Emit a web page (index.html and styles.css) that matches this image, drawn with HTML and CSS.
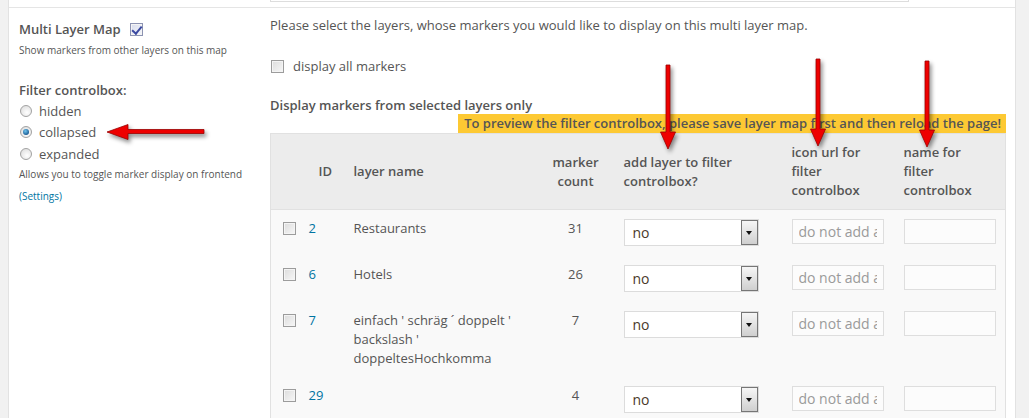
FILE: index.html
```html
<!DOCTYPE html>
<html lang="en">
  <head>
    <meta charset="UTF-8" />
    <meta name="viewport" content="width=device-width, initial-scale=1.0" />
    <title>Multi Layer Map</title>

    <link rel="stylesheet" href="styles.css">
  </head>

  <body>
    <div class="wrap">
      <div class="topbar"><div class="topfield"></div></div>

      <div class="settings">
        <div class="side">
          <div class="side-title">Multi Layer Map<span class="check checked"></span></div>
          <p class="hint">Show markers from other layers on this map</p>

          <div class="side-title filter-title">Filter controlbox:</div>
          <div class="radios">
            <label class="radio-row"><span class="radio"></span>hidden</label>
            <label class="radio-row"><span class="radio on"></span>collapsed</label>
            <label class="radio-row"><span class="radio"></span>expanded</label>
          </div>
          <p class="hint allows">Allows you to toggle marker display on frontend</p>
          <p class="hint settings-link"><a href="#">(Settings)</a></p>
        </div>

        <div class="main">
          <p class="intro">Please select the layers, whose markers you would like to display on this multi layer map.</p>
          <label class="all"><span class="check"></span>display all markers</label>
          <h4 class="subhead">Display markers from selected layers only</h4>
          <div class="notice-row">
            <span class="notice">To preview the filter controlbox, please save layer map first and then reload the page!</span>
          </div>

          <table class="layers">
            <colgroup>
              <col class="c-check" />
              <col class="c-id" />
              <col class="c-name" />
              <col class="c-count" />
              <col class="c-add" />
              <col class="c-icon" />
              <col class="c-label" />
            </colgroup>
            <thead>
              <tr>
                <th></th>
                <th class="th-id">ID</th>
                <th>layer name</th>
                <th class="center">marker count</th>
                <th>add layer to filter controlbox?</th>
                <th>icon url for filter controlbox</th>
                <th class="th-label">name for filter controlbox</th>
              </tr>
            </thead>
            <tbody>
              <tr>
                <td><span class="check"></span></td>
                <td><a href="#">2</a></td>
                <td>Restaurants</td>
                <td class="center">31</td>
                <td><div class="select"><span class="select-value">no</span><span class="select-btn"></span></div></td>
                <td><input class="field" type="text" placeholder="do not add an icon" /></td>
                <td><input class="field" type="text" /></td>
              </tr>
              <tr>
                <td><span class="check"></span></td>
                <td><a href="#">6</a></td>
                <td>Hotels</td>
                <td class="center">26</td>
                <td><div class="select"><span class="select-value">no</span><span class="select-btn"></span></div></td>
                <td><input class="field" type="text" placeholder="do not add an icon" /></td>
                <td><input class="field" type="text" /></td>
              </tr>
              <tr>
                <td><span class="check"></span></td>
                <td><a href="#">7</a></td>
                <td>einfach ' schräg ´ doppelt ' backslash ' doppeltesHochkomma</td>
                <td class="center">7</td>
                <td><div class="select"><span class="select-value">no</span><span class="select-btn"></span></div></td>
                <td><input class="field" type="text" placeholder="do not add an icon" /></td>
                <td><input class="field" type="text" /></td>
              </tr>
              <tr>
                <td><span class="check"></span></td>
                <td><a href="#">29</a></td>
                <td></td>
                <td class="center">4</td>
                <td><div class="select"><span class="select-value">no</span><span class="select-btn"></span></div></td>
                <td><input class="field" type="text" placeholder="do not add an icon" /></td>
                <td><input class="field" type="text" /></td>
              </tr>
            </tbody>
          </table>
        </div>
      </div>
    </div>

    <!-- red annotation arrows drawn over the screenshot -->
    <svg class="arrows" width="1029" height="418" viewBox="0 0 1029 418">
      <g class="arrow">
        <polygon points="107,132 128,124.5 128,129.5 204,129.5 204,133.5 128,133.5 128,139.5" />
        <polygon points="666,65 670,65 670,132 675.5,132 668,149 660.5,132 666,132" />
        <polygon points="816,59 820,59 820,129 825.5,129 818,146 810.5,129 816,129" />
        <polygon points="925,61 929,61 929,130 934.5,130 927,147 919.5,130 925,130" />
      </g>
    </svg>
  </body>
</html>
```

FILE: styles.css
```css
* {
  margin: 0;
  padding: 0;
  box-sizing: border-box;
}

html,
body {
  height: 100%;
}

body {
  font-family: "Open Sans", "DejaVu Sans", sans-serif;
  font-size: 13px;
  color: #555;
  background-color: #f1f1f1;
  overflow: hidden;
  position: relative;
}

a {
  color: #0074a2;
  text-decoration: none;
}

.wrap {
  margin-left: 8px;
  width: 1008px;
  min-height: 418px;
  background-color: #ffffff;
  border-left: 1px solid #e2e2e2;
  border-right: 1px solid #e2e2e2;
}

.topbar {
  height: 8px;
  border-bottom: 1px solid #e5e5e5;
}

.topfield {
  margin-left: 261px;
  width: 639px;
  height: 2px;
  border: 1px solid #dddddd;
  border-top: none;
}

.settings {
  display: grid;
  grid-template-columns: 261px 1fr;
}

/* left column */

.side {
  padding: 12px 10px 0;
}

.side-title {
  display: flex;
  align-items: center;
  gap: 9px;
  font-weight: 600;
  line-height: 18px;
}

.filter-title {
  margin-top: 24px;
}

.hint {
  font-size: 10px;
  line-height: 14px;
  margin-top: 5px;
}

.radios {
  margin-top: 1px;
}

.radio-row {
  display: flex;
  align-items: center;
  gap: 7px;
  height: 21.5px;
  padding-left: 1px;
}

.allows {
  margin-top: 2px;
}

.settings-link {
  margin-top: 8px;
}

.check {
  display: inline-block;
  flex: none;
  position: relative;
  width: 13px;
  height: 13px;
  border: 1px solid #9c9c9c;
  background: linear-gradient(135deg, #dcdcdc, #f7f7f7);
  box-shadow: inset 0 0 0 1px #f4f4f4;
}

.check.checked {
  background: linear-gradient(135deg, #d8dcec, #f4f6fb);
  border-color: #8c93b2;
}

.check.checked::after {
  content: "";
  position: absolute;
  left: 3.5px;
  top: 0.5px;
  width: 3.5px;
  height: 8px;
  border-right: 2px solid #3a48a0;
  border-bottom: 2px solid #3a48a0;
  transform: rotate(40deg);
}

.radio {
  position: relative;
  width: 12px;
  height: 12px;
  flex: none;
  border-radius: 50%;
  border: 1px solid #a2a2a2;
  background: radial-gradient(circle at 60% 65%, #ffffff, #d9d9d9);
}

.radio.on::after {
  content: "";
  position: absolute;
  left: 2px;
  top: 2px;
  width: 6px;
  height: 6px;
  border-radius: 50%;
  background: radial-gradient(circle at 40% 35%, #6fc4ee, #11508a 80%);
}

/* right column */

.main {
  padding: 8px 10px 0 0;
}

.intro {
  line-height: 18px;
}

.all {
  display: flex;
  align-items: center;
  gap: 9px;
  margin-top: 22px;
  padding-left: 1px;
  line-height: 20px;
  font-size: 13px;
}

.subhead {
  margin-top: 20px;
  font-size: 13px;
  font-weight: 600;
  line-height: 18px;
}

.notice-row {
  display: flex;
  justify-content: flex-end;
}

.notice {
  background-color: #fdc933;
  font-weight: 600;
  line-height: 19px;
  padding: 0 5px 0 6px;
  color: #555;
}

.layers {
  width: 735px;
  table-layout: fixed;
  border-collapse: collapse;
  background-color: #f9f9f9;
  border: 1px solid #e1e1e1;
}

.c-check { width: 28px; }
.c-id { width: 45px; }
.c-name { width: 194px; }
.c-count { width: 76px; }
.c-add { width: 168px; }
.c-icon { width: 112px; }
.c-label { width: 112px; }

.layers th {
  background-color: #ececec;
  font-weight: 600;
  text-align: left;
  line-height: 19px;
  padding: 9px 10px;
  vertical-align: middle;
  border-bottom: 1px solid #e1e1e1;
}

.layers th.th-id {
  padding-left: 20px;
}

.layers th.th-label {
  padding-right: 18px;
}

.layers td {
  padding: 9px 10px;
  line-height: 19px;
  vertical-align: top;
}

.layers td:first-child {
  padding-left: 12px;
}

.layers td .check {
  margin-top: 3px;
}

.layers .center {
  text-align: center;
}

.select {
  display: flex;
  width: 135px;
  height: 27px;
  margin-bottom: 1px;
  border: 1px solid #dcdcdc;
  background-color: #ffffff;
  font-size: 14px;
  color: #4a3a2a;
}

.select-value {
  flex: 1;
  line-height: 25px;
  padding-left: 8px;
}

.select-btn {
  position: relative;
  width: 17px;
  border: 1px solid #767676;
  background: linear-gradient(#f6f6f6, #cfcfcf);
}

.select-btn::after {
  content: "";
  position: absolute;
  left: 4px;
  top: 10px;
  border-left: 3.5px solid transparent;
  border-right: 3.5px solid transparent;
  border-top: 4px solid #111;
}

.field {
  display: block;
  width: 92px;
  height: 25px;
  border: 1px solid #dedede;
  background-color: #fcfcfc;
  font-family: "Open Sans", sans-serif;
  font-size: 14px;
  color: #555;
  padding: 0 6px;
  outline: none;
}

.field::placeholder {
  color: #9a9a9a;
}

.arrows {
  position: absolute;
  left: 0;
  top: 0;
  pointer-events: none;
}

.arrow polygon {
  fill: #ee0000;
  stroke: #9b0000;
  stroke-width: 0.8;
  filter: drop-shadow(2px 3px 2px rgba(0, 0, 0, 0.45));
}
```
